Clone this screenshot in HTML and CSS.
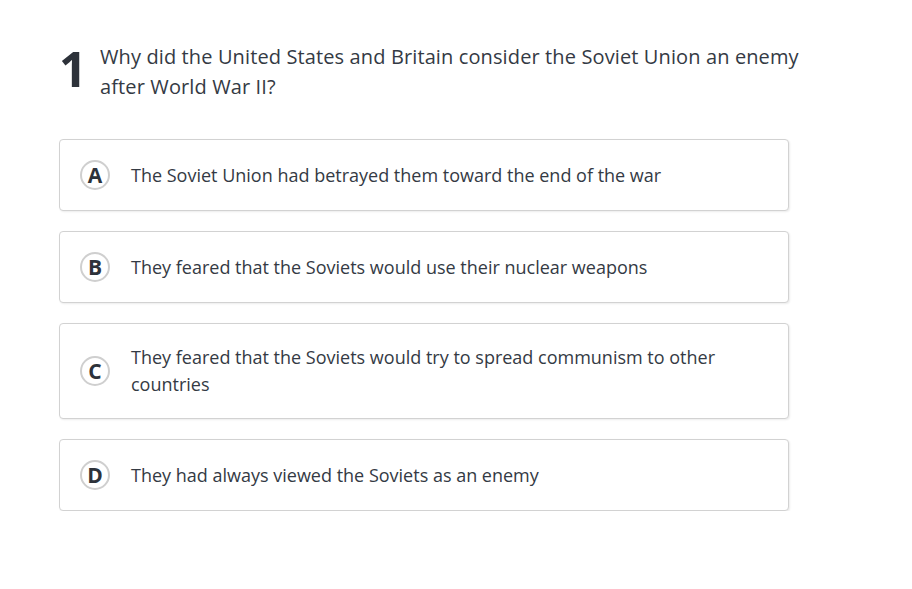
FILE: index.html
```html
<!DOCTYPE html>
<html>
<head>
<meta charset="utf-8">
<link rel="stylesheet" href="styles.css">
</head>
<body>
<div class="quiz">
  <div class="question">
    <div class="qnum">1</div>
    <div class="qtext">Why did the United States and Britain consider the Soviet Union an enemy after World War II?</div>
  </div>
  <div class="options">
    <div class="option"><span class="letter">A</span><span class="otext">The Soviet Union had betrayed them toward the end of the war</span></div>
    <div class="option"><span class="letter">B</span><span class="otext">They feared that the Soviets would use their nuclear weapons</span></div>
    <div class="option"><span class="letter">C</span><span class="otext">They feared that the Soviets would try to spread communism to other countries</span></div>
    <div class="option"><span class="letter">D</span><span class="otext">They had always viewed the Soviets as an enemy</span></div>
  </div>
</div>
</body>
</html>
```
FILE: styles.css
```css
html, body { margin: 0; padding: 0; background: #fff; }
body { font-family: "Open Sans", "Liberation Sans", sans-serif; color: #343a44; }
.quiz { padding: 42px 0 0 59px; width: 780px; }
.question { display: flex; align-items: flex-start; }
.qnum { flex: none; width: 41px; font-size: 49px; font-weight: 700; line-height: 46px; color: #2d323a; margin-top: 3px; }
.qtext { flex: none; font-size: 20px; line-height: 30px; width: 710px; letter-spacing: 0.12px; }
.options { margin-top: 37px; width: 730px; display: flex; flex-direction: column; gap: 20px; }
.option { display: flex; align-items: center; border: 1px solid #d2d2d2; border-radius: 4px; padding: 20px; min-height: 30px; box-shadow: 1px 1px 2px rgba(0,0,0,0.08); background: #fff; }
.letter { flex: none; width: 26px; height: 26px; border: 2px solid #cfcfcf; border-radius: 50%; display: flex; align-items: center; justify-content: center; font-weight: 700; font-size: 21px; line-height: 1; color: #2d323a; margin-right: 21px; }
.otext { font-size: 18px; line-height: 27px; width: 600px; }
```
